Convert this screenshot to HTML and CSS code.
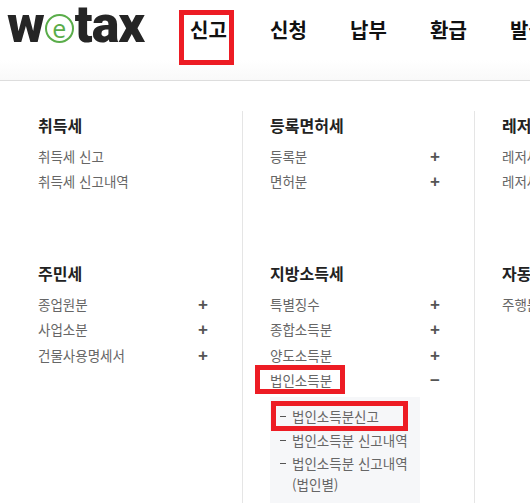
FILE: index.html
```html
<!DOCTYPE html>
<html lang="ko">
<head>
    <meta charset="UTF-8">
    <title>wetax</title>
    <link rel="stylesheet" href="styles.css">
</head>
<body>
    <header class="top-bar">
        <a href="#" class="logo">w<span class="logo-e">e</span>tax</a>
        <nav class="main-nav">
            <a href="#" class="nav-item marked">신고</a>
            <a href="#" class="nav-item">신청</a>
            <a href="#" class="nav-item">납부</a>
            <a href="#" class="nav-item">환급</a>
            <a href="#" class="nav-item">발급</a>
        </nav>
    </header>

    <main class="menu-grid">
        <section class="menu-col">
            <div class="menu-group">
                <h3>취득세</h3>
                <ul>
                    <li>취득세 신고</li>
                    <li>취득세 신고내역</li>
                </ul>
            </div>
            <div class="menu-group">
                <h3>주민세</h3>
                <ul>
                    <li class="has-sub">종업원분</li>
                    <li class="has-sub">사업소분</li>
                    <li class="has-sub">건물사용명세서</li>
                </ul>
            </div>
        </section>

        <section class="menu-col">
            <div class="menu-group">
                <h3>등록면허세</h3>
                <ul>
                    <li class="has-sub">등록분</li>
                    <li class="has-sub">면허분</li>
                </ul>
            </div>
            <div class="menu-group">
                <h3>지방소득세</h3>
                <ul>
                    <li class="has-sub">특별징수</li>
                    <li class="has-sub">종합소득분</li>
                    <li class="has-sub">양도소득분</li>
                    <li class="has-sub open marked-row">법인소득분</li>
                </ul>
                <ul class="sub-list">
                    <li class="marked-sub">법인소득분신고</li>
                    <li>법인소득분 신고내역</li>
                    <li>법인소득분 신고내역 (법인별)</li>
                </ul>
            </div>
        </section>

        <section class="menu-col">
            <div class="menu-group">
                <h3>레저세</h3>
                <ul>
                    <li>레저세 신고</li>
                    <li>레저세 신고내역</li>
                </ul>
            </div>
            <div class="menu-group">
                <h3>자동차세</h3>
                <ul>
                    <li>주행분</li>
                </ul>
            </div>
        </section>
    </main>
</body>
</html>
```

FILE: styles.css
```css
*, *::before, *::after {
    box-sizing: border-box;
}
html, body {
    height: 100%;
    overflow: hidden;
}
body {
    margin: 0;
    width: 530px;
    background: #fff;
    font-family: 'Noto Sans CJK KR', 'Noto Sans', sans-serif;
    color: #666;
}
a {
    color: inherit;
    text-decoration: none;
}
.top-bar {
    display: flex;
    height: 81px;
    padding-left: 7px;
    border-bottom: 1px solid #ddd;
    background: linear-gradient(180deg, #fff 75%, #f9f9f9);
}
.logo {
    flex: none;
    display: flex;
    align-items: center;
    height: 50px;
    width: 183px;
    font-family: 'Roboto', sans-serif;
    font-size: 52px;
    line-height: 50px;
    font-weight: 900;
    letter-spacing: -1px;
    color: #252525;
}
.logo-e {
    flex: none;
    display: flex;
    align-items: center;
    justify-content: center;
    width: 29px;
    height: 29px;
    margin: 7px 1px 0;
    border: 2px solid #5aad4a;
    border-radius: 50%;
    font-family: 'Open Sans', sans-serif;
    font-size: 25px;
    font-weight: 400;
    letter-spacing: 0;
    line-height: 1;
    color: #5aad4a;
}
.main-nav {
    flex: none;
    display: flex;
    gap: 43.2px;
}
.nav-item {
    position: relative;
    flex: none;
    margin-top: 15px;
    height: 29px;
    font-size: 20px;
    line-height: 29px;
    font-weight: 700;
    color: #111;
}
.nav-item.marked::after {
    content: "";
    position: absolute;
    left: -11px;
    top: -5px;
    width: 55px;
    height: 55px;
    border: 5px solid #ed1c24;
}
.menu-grid {
    display: grid;
    grid-template-columns: 242px 232px 232px;
    margin-top: 30px;
    height: 392px;
}
.menu-col {
    padding-left: 27px;
    border-left: 1px solid #e5e5e5;
}
.menu-col:first-child {
    padding-left: 38px;
    border-left: none;
}
.menu-group {
    height: 148px;
}
.menu-group h3 {
    margin: 0 0 7px;
    padding-top: 3px;
    font-size: 16px;
    line-height: 23px;
    font-weight: 700;
    color: #222;
}
.menu-group ul {
    margin: 0;
    padding: 0;
    list-style: none;
}
.menu-group li {
    position: relative;
    width: 170px;
    font-size: 13.5px;
    line-height: 25.3px;
    color: #666;
    white-space: nowrap;
}
.has-sub::after {
    content: "+";
    position: absolute;
    right: 0;
    top: 0;
    width: 10px;
    font-family: 'Liberation Sans', sans-serif;
    font-size: 17px;
    font-weight: 700;
    color: #555;
}
.has-sub.open::after {
    content: "−";
}
.marked-row::before {
    content: "";
    position: absolute;
    left: -15px;
    top: -3px;
    width: 90px;
    height: 29px;
    border: 5px solid #ed1c24;
}
.menu-group .sub-list {
    width: 150px;
    margin-top: 4px;
    padding: 9px 8px 20px 22px;
    background: #f6f7f9;
}
.sub-list li {
    width: auto;
    margin-bottom: 2.5px;
    line-height: 21px;
    white-space: normal;
}
.sub-list li::before {
    content: "";
    position: absolute;
    left: -12px;
    top: 10px;
    width: 6px;
    height: 1px;
    background: #555;
}
.marked-sub::after {
    content: "";
    position: absolute;
    left: -21px;
    top: -5px;
    width: 137px;
    height: 30px;
    border: 5px solid #ed1c24;
}
```
